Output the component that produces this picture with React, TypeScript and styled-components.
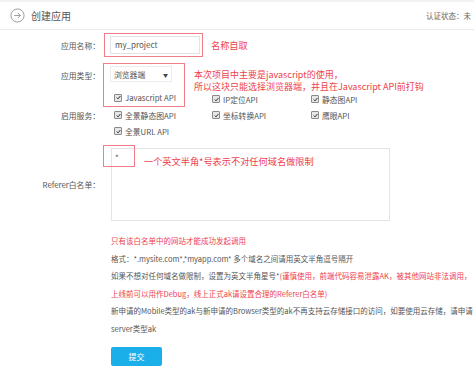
import { createGlobalStyle, styled } from 'styled-components'

const RED = '#ee3f4d'
const BOX = '#ef7e88'

const GlobalStyle = createGlobalStyle`
  html, body {
    margin: 0;
    padding: 0;
    background: #fff;
    font-family: "Noto Sans CJK SC", "Noto Sans", sans-serif;
    color: #555;
  }
`

const checks = [
  ['Javascript API', 'IP定位API', '静态图API'],
  ['全景静态图API', '坐标转换API', '鹰眼API'],
  ['全景URL API'],
]

const CheckItem = ({ text }: { text: string }) => (
  <Check>
    <CheckMark>
      <svg width="5" height="5" viewBox="0 0 10 10">
        <path d="M1.5 5.2 L4 7.8 L8.8 2" fill="none" stroke="#333" strokeWidth="2" />
      </svg>
    </CheckMark>
    {text}
  </Check>
)

const App = () => {
  return (
    <Page>
      <GlobalStyle />
      <Header>
        <svg width="15" height="15" viewBox="0 0 16 16">
          <circle cx="8" cy="8" r="7" fill="none" stroke="#999" strokeWidth="1" />
          <path d="M4.5 8 H11 M8.3 5.2 L11 8 L8.3 10.8" fill="none" stroke="#999" strokeWidth="1" />
        </svg>
        <Title>创建应用</Title>
        <Status>认证状态：未</Status>
      </Header>

      <Form>
        <NameRow>
          <Label>应用名称：</Label>
          <NameBox>
            <Input>my_project</Input>
          </NameBox>
          <Note>名称自取</Note>
        </NameRow>

        <ServiceGrid>
          <GridLabel $row={1}>应用类型：</GridLabel>
          <TypeBox>
            <Select>
              <span>浏览器端</span>
              <Arrow>▼</Arrow>
            </Select>
            <CheckItem text={checks[0][0]} />
          </TypeBox>
          <TypeNote>
            本次项目中主要是javascript的使用，
            <br />
            所以这块只能选择浏览器端，并且在Javascript API前打钩
          </TypeNote>
          <Cell $row={2} $col={3}>
            <CheckItem text={checks[0][1]} />
          </Cell>
          <Cell $row={2} $col={4}>
            <CheckItem text={checks[0][2]} />
          </Cell>
          <GridLabel $row={3}>启用服务：</GridLabel>
          {checks.slice(1).map((row, r) =>
            row.map((item, c) => (
              <Cell key={item} $row={r + 3} $col={c + 2} $first={c === 0}>
                <CheckItem text={item} />
              </Cell>
            )),
          )}
        </ServiceGrid>

        <RefererRow>
          <Label>Referer白名单：</Label>
          <AreaWrap>
            <TextArea>*</TextArea>
            <StarBox />
            <StarNote>一个英文半角*号表示不对任何域名做限制</StarNote>
          </AreaWrap>
        </RefererRow>

        <Help>
          <Red>只有该白名单中的网站才能成功发起调用</Red>
          <br />
          格式：*.mysite.com*,*myapp.com* 多个域名之间请用英文半角逗号隔开
          <br />
          如果不想对任何域名做限制，设置为英文半角星号*
          <Red>
            (谨慎使用，前端代码容易泄露AK，被其他网站非法调用，
            <br />
            上线前可以用作Debug，线上正式ak请设置合理的Referer白名单)
          </Red>
          <br />
          新申请的Mobile类型的ak与新申请的Browser类型的ak不再支持云存储接口的访问，如要使用云存储，请申请
          <br />
          server类型ak
        </Help>

        <Submit>提交</Submit>
      </Form>
    </Page>
  )
}

const Page = styled.div`
  width: 474px;
  height: 379px;
  overflow: hidden;
  border-top: 2px solid #f2f2f2;
  box-sizing: border-box;
`

const Header = styled.div`
  height: 27px;
  display: flex;
  align-items: center;
  padding-left: 10px;
  padding-right: 3px;
  border-bottom: 1px solid #ebebeb;
`

const Title = styled.div`
  font-size: 10px;
  color: #555;
  margin-left: 6px;
  margin-top: -1px;
`

const Status = styled.div`
  margin-left: auto;
  white-space: nowrap;
  font-size: 7.5px;
  color: #666;
`

const Form = styled.div`
  padding-top: 3px;
`

const Label = styled.div`
  width: 100px;
  flex-shrink: 0;
  text-align: right;
  font-size: 7.8px;
  color: #555;
`

const NameRow = styled.div`
  display: flex;
  align-items: center;
  height: 24px;
`

const NameBox = styled.div`
  margin-left: 4px;
  width: 99px;
  height: 24px;
  box-sizing: border-box;
  border: 1px solid ${BOX};
  padding: 2px 2px 2px 5px;
`

const Input = styled.div`
  height: 18px;
  box-sizing: border-box;
  border: 1px solid #e3e3e3;
  font-size: 8px;
  line-height: 16px;
  padding-left: 4px;
  color: #555;
`

const Note = styled.div`
  margin-left: 8px;
  font-size: 9.2px;
  color: ${RED};
`

const ServiceGrid = styled.div`
  margin-top: 5px;
  display: grid;
  grid-template-columns: 100px 94px 99px 1fr;
  grid-template-rows: 29px 16px 16px 16px;
`

const GridLabel = styled(Label)<{ $row: number }>`
  grid-column: 1;
  grid-row: ${(p) => p.$row};
  align-self: center;
  margin-top: ${(p) => (p.$row === 1 ? '-2px' : '0')};
`

const TypeBox = styled.div`
  grid-column: 2;
  grid-row: 1 / 3;
  margin: 1px 0 0 3px;
  width: 82px;
  height: 44px;
  box-sizing: border-box;
  border: 1px solid ${BOX};
  padding: 2px 0 0 6px;
  display: flex;
  flex-direction: column;
  gap: 10px;

  & > label {
    margin-left: 4px;
  }
`

const Select = styled.div`
  width: 62px;
  height: 16px;
  box-sizing: border-box;
  border: 1px solid #ececec;
  display: flex;
  align-items: center;
  justify-content: space-between;
  padding: 0 3px 0 3px;
  font-size: 7.8px;
  color: #555;
`

const Arrow = styled.span`
  font-size: 5px;
  color: #444;
`

const TypeNote = styled.div`
  grid-column: 3 / 5;
  grid-row: 1;
  font-size: 9px;
  line-height: 12px;
  color: ${RED};
  padding-top: 7px;
  white-space: nowrap;
`

const Cell = styled.div<{ $row: number; $col: number; $first?: boolean }>`
  grid-row: ${(p) => p.$row};
  grid-column: ${(p) => p.$col};
  display: flex;
  align-items: center;
  padding-left: ${(p) => (p.$first ? '14px' : '18px')};
`

const Check = styled.label`
  display: flex;
  align-items: center;
  gap: 3px;
  font-size: 7.8px;
  color: #555;
  white-space: nowrap;
`

const CheckMark = styled.span`
  width: 6px;
  height: 6px;
  border: 1px solid #8a8a8a;
  border-radius: 1px;
  background: #e6e6e6;
  display: flex;
  align-items: center;
  justify-content: center;
`

const RefererRow = styled.div`
  display: flex;
  align-items: center;
  margin-top: 9px;
`

const AreaWrap = styled.div`
  position: relative;
  margin-left: 11px;
`

const TextArea = styled.div`
  width: 279px;
  height: 73px;
  box-sizing: border-box;
  border: 1px solid #e4e4e4;
  padding: 3px 3px;
  font-size: 8px;
  color: #555;
`

const StarBox = styled.div`
  position: absolute;
  left: -8px;
  top: -3px;
  width: 32px;
  height: 22px;
  box-sizing: border-box;
  border: 1px solid ${BOX};
`

const StarNote = styled.div`
  position: absolute;
  left: 33px;
  top: 7px;
  font-size: 9.2px;
  line-height: 12px;
  color: ${RED};
  white-space: nowrap;
`

const Help = styled.div`
  margin: 11px 0 0 111px;
  font-size: 7.5px;
  line-height: 17.6px;
  color: #555;
  white-space: nowrap;
`

const Red = styled.span`
  color: ${RED};
`

const Submit = styled.button`
  margin: 9px 0 0 111px;
  width: 51px;
  height: 19px;
  border: none;
  border-radius: 2px;
  background: #1aafe8;
  color: #fff;
  font-family: inherit;
  font-size: 8px;
  padding: 0;
  display: block;
`

export default App
